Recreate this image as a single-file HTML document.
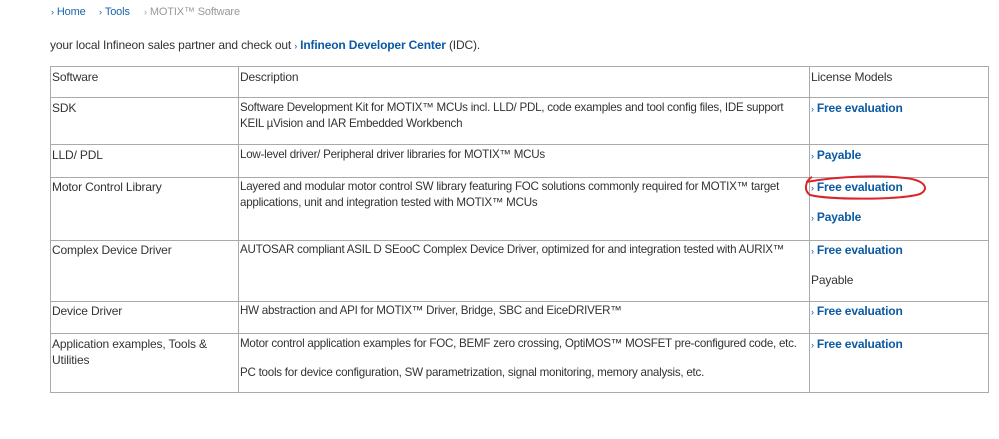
<!DOCTYPE html>
<html><head><meta charset="utf-8"><style>
body{margin:0;width:999px;height:439px;background:#fff;position:relative;overflow:hidden;font-family:"Liberation Sans",sans-serif;color:#333;font-size:12px;}
.t{position:absolute;white-space:nowrap;line-height:16px;letter-spacing:-0.15px}
.d{font-size:11.6px;letter-spacing:-0.25px}
.l{color:#0b5aa2;font-weight:bold}
.a{font-size:9px;font-weight:normal;margin-right:3px}
.h{position:absolute;height:1px;background:#aaa;left:50px;width:939px}
.v{position:absolute;width:1px;background:#aaa;top:66px;height:327px}
</style></head><body>
<div class="t" style="left:51px;top:4px;font-size:11px;color:#1a64ad"><span class="a">›</span>Home</div>
<div class="t" style="left:99px;top:4px;font-size:11px;color:#1a64ad"><span class="a">›</span>Tools</div>
<div class="t" style="left:144px;top:4px;font-size:11px;color:#999"><span class="a">›</span>MOTIX™ Software</div>
<div class="t" style="left:50px;top:37px">your local Infineon sales partner and check out <span class="l"><span class="a">›</span>Infineon Developer Center</span> (IDC).</div>

<div class="h" style="top:66px"></div><div class="h" style="top:97px"></div><div class="h" style="top:144px"></div><div class="h" style="top:177px"></div><div class="h" style="top:240px"></div><div class="h" style="top:301px"></div><div class="h" style="top:333px"></div><div class="h" style="top:392px"></div>
<div class="v" style="left:50px"></div><div class="v" style="left:238px"></div><div class="v" style="left:809px"></div><div class="v" style="left:988px"></div>

<div class="t" style="left:52px;top:69px">Software</div>
<div class="t" style="left:240px;top:69px">Description</div>
<div class="t" style="left:811px;top:69px">License Models</div>

<div class="t" style="left:52px;top:100px">SDK</div>
<div class="t d" style="left:240px;top:100px">Software Development Kit for MOTIX™ MCUs incl. LLD/ PDL, code examples and tool config files, IDE support<br>KEIL µVision and IAR Embedded Workbench</div>
<div class="t l" style="left:811px;top:100px"><span class="a">›</span>Free evaluation</div>

<div class="t" style="left:52px;top:147px">LLD/ PDL</div>
<div class="t d" style="left:240px;top:147px">Low-level driver/ Peripheral driver libraries for MOTIX™ MCUs</div>
<div class="t l" style="left:811px;top:147px"><span class="a">›</span>Payable</div>

<div class="t" style="left:52px;top:179px">Motor Control Library</div>
<div class="t d" style="left:240px;top:179px">Layered and modular motor control SW library featuring FOC solutions commonly required for MOTIX™ target<br>applications, unit and integration tested with MOTIX™ MCUs</div>
<div class="t l" style="left:811px;top:179px"><span class="a">›</span>Free evaluation</div>
<div class="t l" style="left:811px;top:209px"><span class="a">›</span>Payable</div>

<div class="t" style="left:52px;top:242px">Complex Device Driver</div>
<div class="t d" style="left:240px;top:242px">AUTOSAR compliant ASIL D SEooC Complex Device Driver, optimized for and integration tested with AURIX™</div>
<div class="t l" style="left:811px;top:242px"><span class="a">›</span>Free evaluation</div>
<div class="t" style="left:811px;top:272px">Payable</div>

<div class="t" style="left:52px;top:303px">Device Driver</div>
<div class="t d" style="left:240px;top:303px">HW abstraction and API for MOTIX™ Driver, Bridge, SBC and EiceDRIVER™</div>
<div class="t l" style="left:811px;top:303px"><span class="a">›</span>Free evaluation</div>

<div class="t" style="left:52px;top:336px">Application examples, Tools &amp;<br>Utilities</div>
<div class="t d" style="left:240px;top:336px">Motor control application examples for FOC, BEMF zero crossing, OptiMOS™ MOSFET pre-configured code, etc.</div>
<div class="t d" style="left:240px;top:365px">PC tools for device configuration, SW parametrization, signal monitoring, memory analysis, etc.</div>
<div class="t l" style="left:811px;top:336px"><span class="a">›</span>Free evaluation</div>

<svg style="position:absolute;left:0;top:0" width="999" height="439"><path d="M812 177 C 806 180,803 190,810 195 C 830 200,900 200,920 194 C 930 189,925 180,905 178 C 880 175,840 176,806 182" fill="none" stroke="#d8262b" stroke-width="2"/></svg>
</body></html>
